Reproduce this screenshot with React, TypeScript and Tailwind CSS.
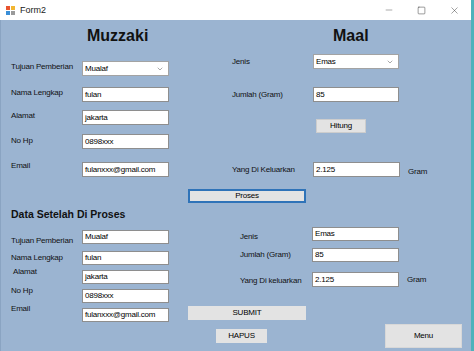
import { ChevronDown, Minus, Square, X } from 'lucide-react';

const font = { fontFamily: '"Liberation Sans", Arial, sans-serif' };

function TextBox({ value, w = 'w-[87px]', h = 'h-[15px]' }: { value: string; w?: string; h?: string }) {
  return (
    <div
      className={`${w} ${h} shrink-0 bg-white border border-[#8e8e8e] flex items-center pl-[2px] text-[8px] leading-none tracking-[-0.2px] text-black`}
    >
      {value}
    </div>
  );
}

function ComboBox({ value, w = 'w-[87px]' }: { value: string; w?: string }) {
  return (
    <div
      className={`${w} h-[15px] shrink-0 bg-white border border-[#a3a3a3] flex items-center justify-between pl-[2px] pr-[4px] text-[8px] leading-none tracking-[-0.2px] text-black`}
    >
      <span>{value}</span>
      <ChevronDown size={8} strokeWidth={1.5} className="text-[#555]" />
    </div>
  );
}

function Button({ label, className }: { label: string; className: string }) {
  return (
    <div
      className={`${className} shrink-0 bg-[#e3e3e3] border border-[#cdcdcd] flex items-center justify-center text-[8px] leading-none tracking-[-0.2px] text-black`}
    >
      {label}
    </div>
  );
}

function Label({ text, className = '' }: { text: string; className?: string }) {
  return <div className={`text-[8px] leading-none tracking-[-0.2px] text-[#111] ${className}`}>{text}</div>;
}

export default function App() {
  return (
    <div className="w-[474px] h-[351px] flex overflow-hidden bg-[#4fb2bb]" style={font}>
      <div className="w-[471px] h-full flex flex-col">
        {/* title bar */}
        <div className="h-[20px] bg-white flex items-center shrink-0">
          <svg width="9" height="9" viewBox="0 0 9 9" className="ml-[6px]">
            <rect x="0" y="0" width="4" height="4" fill="#e8542f" />
            <rect x="5" y="0" width="4" height="4" fill="#f2b632" />
            <rect x="0" y="5" width="4" height="4" fill="#3a8fd8" />
            <rect x="5" y="5" width="4" height="4" fill="#9a9a9a" />
          </svg>
          <span className="ml-[5px] text-[9px] leading-none text-[#222]">Form2</span>
          <div className="ml-auto flex items-center">
            <div className="w-[33px] flex justify-center">
              <Minus size={10} strokeWidth={1} className="text-[#333]" />
            </div>
            <div className="w-[33px] flex justify-center">
              <Square size={9} strokeWidth={1.3} className="text-[#333]" />
            </div>
            <div className="w-[33px] flex justify-center">
              <X size={11} strokeWidth={1} className="text-[#333]" />
            </div>
          </div>
        </div>

        {/* form body */}
        <div className="flex-1 bg-[#9bb4d1] flex flex-col border-l border-[#8aa4c2]">
          {/* top section */}
          <div className="flex items-start">
            <div className="w-[231px] flex flex-col">
              <div className="mt-[8px] pl-[86px] text-[16px] leading-none font-bold text-[#111]">Muzzaki</div>
              <div className="pl-[10px] flex flex-col">
                <div className="mt-[17px] flex items-center">
                  <Label text="Tujuan Pemberian" className="w-[71px] mb-[4px]" />
                  <ComboBox value="Mualaf" />
                </div>
                <div className="mt-[11px] flex items-center">
                  <Label text="Nama Lengkap" className="w-[71px] mb-[4px]" />
                  <TextBox value="fulan" />
                </div>
                <div className="mt-[8px] flex items-center">
                  <Label text="Alamat" className="w-[71px] mb-[3px]" />
                  <TextBox value="jakarta" />
                </div>
                <div className="mt-[9px] flex items-center">
                  <Label text="No Hp" className="w-[71px] mb-[2px]" />
                  <TextBox value="0898xxx" />
                </div>
                <div className="mt-[13px] flex items-center">
                  <Label text="Email" className="w-[71px] mb-[7px]" />
                  <TextBox value="fulanxxx@gmail.com" />
                </div>
              </div>
            </div>

            <div className="flex flex-col">
              <div className="mt-[8px] pl-[101px] text-[16px] leading-none font-bold text-[#111]">Maal</div>
              <div className="mt-[10px] flex items-center">
                <Label text="Jenis" className="w-[81px]" />
                <ComboBox value="Emas" w="w-[86px]" />
              </div>
              <div className="mt-[18px] flex items-center">
                <Label text="Jumlah (Gram)" className="w-[81px]" />
                <TextBox value="85" w="w-[86px]" />
              </div>
              <div className="mt-[17px] flex">
                <Button label="Hitung" className="ml-[84px] w-[50px] h-[14px]" />
              </div>
              <div className="mt-[29px] flex items-center">
                <Label text="Yang Di Keluarkan" className="w-[81px]" />
                <TextBox value="2.125" w="w-[87px]" />
                <Label text="Gram" className="ml-[8px] mt-[4px]" />
              </div>
            </div>
          </div>

          {/* proses */}
          <div className="mt-[12px] flex">
            <div className="ml-[187px] w-[118px] h-[14px] bg-[#e3e3e3] border-2 border-[#2f73b8] flex items-center justify-center text-[8px] leading-none tracking-[-0.2px] text-black">
              Proses
            </div>
          </div>

          {/* bottom section */}
          <div className="flex items-start">
            <div className="w-[179px] pl-[10px] flex flex-col">
              <div className="mt-[6px] text-[10.5px] leading-[11px] font-bold text-[#111]">Data Setelah Di Proses</div>
              <div className="mt-[10px] flex items-start">
                <Label text="Tujuan Pemberian" className="w-[71px] mt-[7px]" />
                <TextBox value="Mualaf" h="h-[14px]" />
              </div>
              <div className="mt-[6px] flex items-start">
                <Label text="Nama Lengkap" className="w-[71px] mt-[3px]" />
                <TextBox value="fulan" h="h-[14px]" />
              </div>
              <div className="mt-[5px] flex items-start">
                <Label text="Alamat" className="w-[71px] -mt-[2px] pl-[2px]" />
                <TextBox value="jakarta" h="h-[14px]" />
              </div>
              <div className="mt-[5px] flex items-start">
                <Label text="No Hp" className="w-[71px] -mt-[2px]" />
                <TextBox value="0898xxx" h="h-[14px]" />
              </div>
              <div className="mt-[5px] flex items-start">
                <Label text="Email" className="w-[71px] -mt-[3px]" />
                <TextBox value="fulanxxx@gmail.com" h="h-[14px]" />
              </div>
            </div>

            <div className="flex-1 flex flex-col">
              <div className="mt-[23px] pl-[60px] flex items-center">
                <Label text="Jenis" className="w-[72px] mt-[7px]" />
                <TextBox value="Emas" h="h-[14px]" />
              </div>
              <div className="mt-[7px] pl-[60px] flex items-center">
                <Label text="Jumlah (Gram)" className="w-[72px]" />
                <TextBox value="85" h="h-[14px]" />
              </div>
              <div className="mt-[10px] pl-[60px] flex items-center">
                <Label text="Yang Di keluarkan" className="w-[72px] mt-[2px]" />
                <TextBox value="2.125" />
                <Label text="Gram" className="ml-[8px]" />
              </div>
              <div className="mt-[19px] flex">
                <Button label="SUBMIT" className="ml-[8px] w-[118px] h-[14px] border-[#e3e3e3]" />
              </div>
              <div className="mt-[4px] flex items-center">
                <Button label="HAPUS" className="ml-[36px] w-[51px] h-[14px] border-[#e3e3e3]" />
                <Button label="Menu" className="ml-[118px] w-[77px] h-[24px] border-[#d8d8d8]" />
              </div>
            </div>
          </div>
        </div>
      </div>
    </div>
  );
}
